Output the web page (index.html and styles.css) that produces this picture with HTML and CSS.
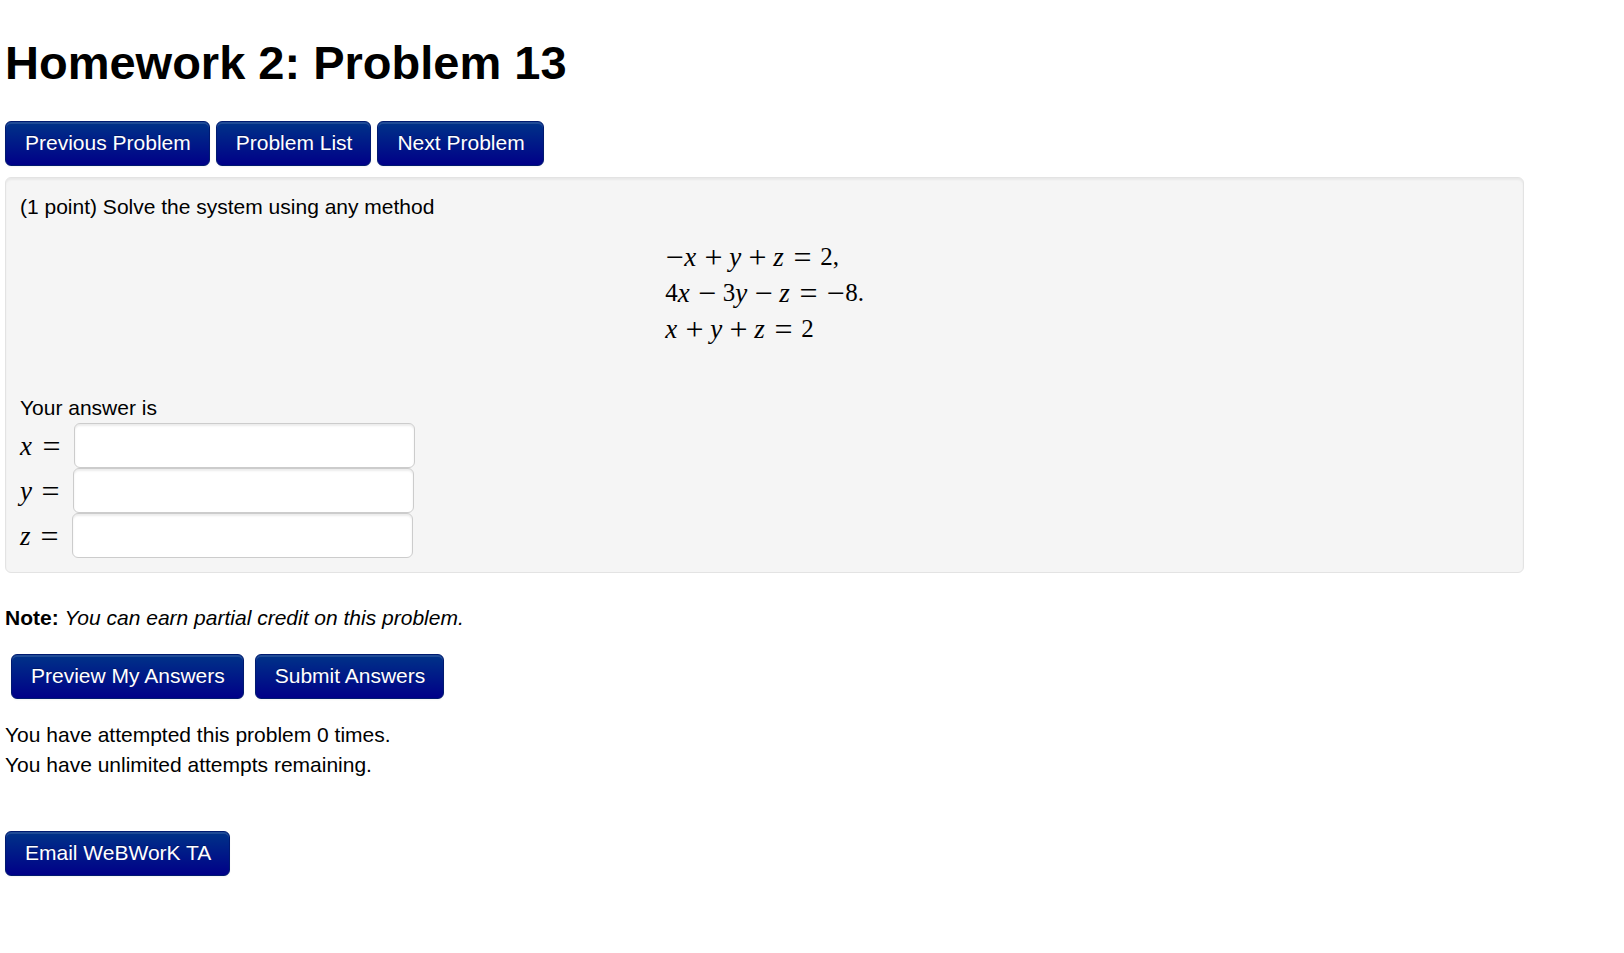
FILE: index.html
```html
<!DOCTYPE html>
<html lang="en">
<head>
<meta charset="utf-8">
<title>Homework 2: Problem 13</title>
<link rel="stylesheet" href="styles.css">
</head>
<body>
<main class="page">
  <h1 class="title">Homework 2: Problem 13</h1>
  <nav class="nav">
    <a class="btn" href="#">Previous Problem</a>
    <a class="btn" href="#">Problem List</a>
    <a class="btn" href="#">Next Problem</a>
  </nav>
  <form class="form">
    <section class="well">
      <p class="text">(1 point) Solve the system using any method</p>
      <div class="system">
        <div class="equations">
          <div class="math"><span class="sign">−</span><i class="x">x</i><span class="op">+</span><i class="y">y</i><span class="op">+</span><i class="z">z</i><span class="op rel">=</span><span>2,</span></div>
          <div class="math"><span>4</span><i class="x">x</i><span class="op">−</span><span>3</span><i class="y">y</i><span class="op">−</span><i class="z">z</i><span class="op rel">=</span><span class="sign">−</span><span>8.</span></div>
          <div class="math"><i class="x">x</i><span class="op">+</span><i class="y">y</i><span class="op">+</span><i class="z">z</i><span class="op rel">=</span><span>2</span></div>
        </div>
      </div>
      <p class="text">Your answer is</p>
      <div class="answer">
        <label class="math" for="ans-x"><i class="x">x</i><span class="op rel">=</span></label>
        <input class="field" id="ans-x" type="text">
      </div>
      <div class="answer">
        <label class="math" for="ans-y"><i class="y">y</i><span class="op rel">=</span></label>
        <input class="field" id="ans-y" type="text">
      </div>
      <div class="answer">
        <label class="math" for="ans-z"><i class="z">z</i><span class="op rel">=</span></label>
        <input class="field" id="ans-z" type="text">
      </div>
    </section>
    <p class="text note"><b>Note:</b> <em>You can earn partial credit on this problem.</em></p>
    <div class="actions">
      <button class="btn" type="button">Preview My Answers</button>
      <button class="btn" type="button">Submit Answers</button>
    </div>
  </form>
  <p class="text">You have attempted this problem 0 times.<br>You have unlimited attempts remaining.</p>
  <div class="contact">
    <button class="btn" type="button">Email WeBWorK TA</button>
  </div>
</main>
</body>
</html>
```
FILE: styles.css
```css
* {
  box-sizing: border-box;
}

body {
  margin: 0;
  background: #fff;
  color: #000;
  font-family: "Liberation Sans", Arial, sans-serif;
  font-size: 21px;
  line-height: 30px;
}

.page {
  padding: 33px 100px 32px 5px;
}

.title {
  margin: 0 0 28px;
  font-size: 47px;
  line-height: 60px;
}

.nav {
  display: flex;
  flex-wrap: wrap;
  gap: 6px;
}

.btn {
  display: inline-block;
  padding: 6px 18px 7px 19px;
  border: 1px solid #001a70;
  border-radius: 6px;
  background: linear-gradient(#003388, #000088);
  box-shadow: inset 0 2px 0 rgba(255, 255, 255, 0.12), 0 1px 2px rgba(0, 0, 0, 0.05);
  color: #fff;
  font: inherit;
  text-decoration: none;
  text-shadow: 0 -1px 0 rgba(0, 0, 0, 0.25);
  cursor: pointer;
}

.well {
  margin-top: 11px;
  padding: 14px;
  border: 1px solid #e3e3e3;
  border-radius: 6px;
  background: #f5f5f5;
  box-shadow: inset 0 2px 2px rgba(0, 0, 0, 0.05);
}

.text {
  margin: 0;
}

.system {
  display: flex;
  justify-content: center;
  padding: 17px 0 46px;
}

.math {
  display: flex;
  align-items: center;
  font-family: "Liberation Serif", "Times New Roman", serif;
  font-size: 25px;
  line-height: 36px;
}

.x,
.y,
.z {
  font-size: 27px;
}

.x {
  width: 14px;
}

.y {
  width: 13px;
}

.z {
  width: 12px;
}

.op,
.sign {
  width: 19px;
  font-size: 32px;
  text-align: center;
}

.op {
  margin: 0 6px;
}

.rel {
  margin: 0 8px;
}

.answer {
  display: flex;
  align-items: center;
  gap: 5px;
}

.field {
  width: 341px;
  height: 45px;
  padding: 6px 9px;
  border: 1px solid #ccc;
  border-radius: 6px;
  background: #fff;
  box-shadow: inset 0 2px 2px rgba(0, 0, 0, 0.075);
  font: inherit;
}

.note {
  margin-top: 30px;
}

.actions {
  display: flex;
  flex-wrap: wrap;
  gap: 11px;
  padding: 21px 6px;
}

.contact {
  margin-top: 51px;
}
```
